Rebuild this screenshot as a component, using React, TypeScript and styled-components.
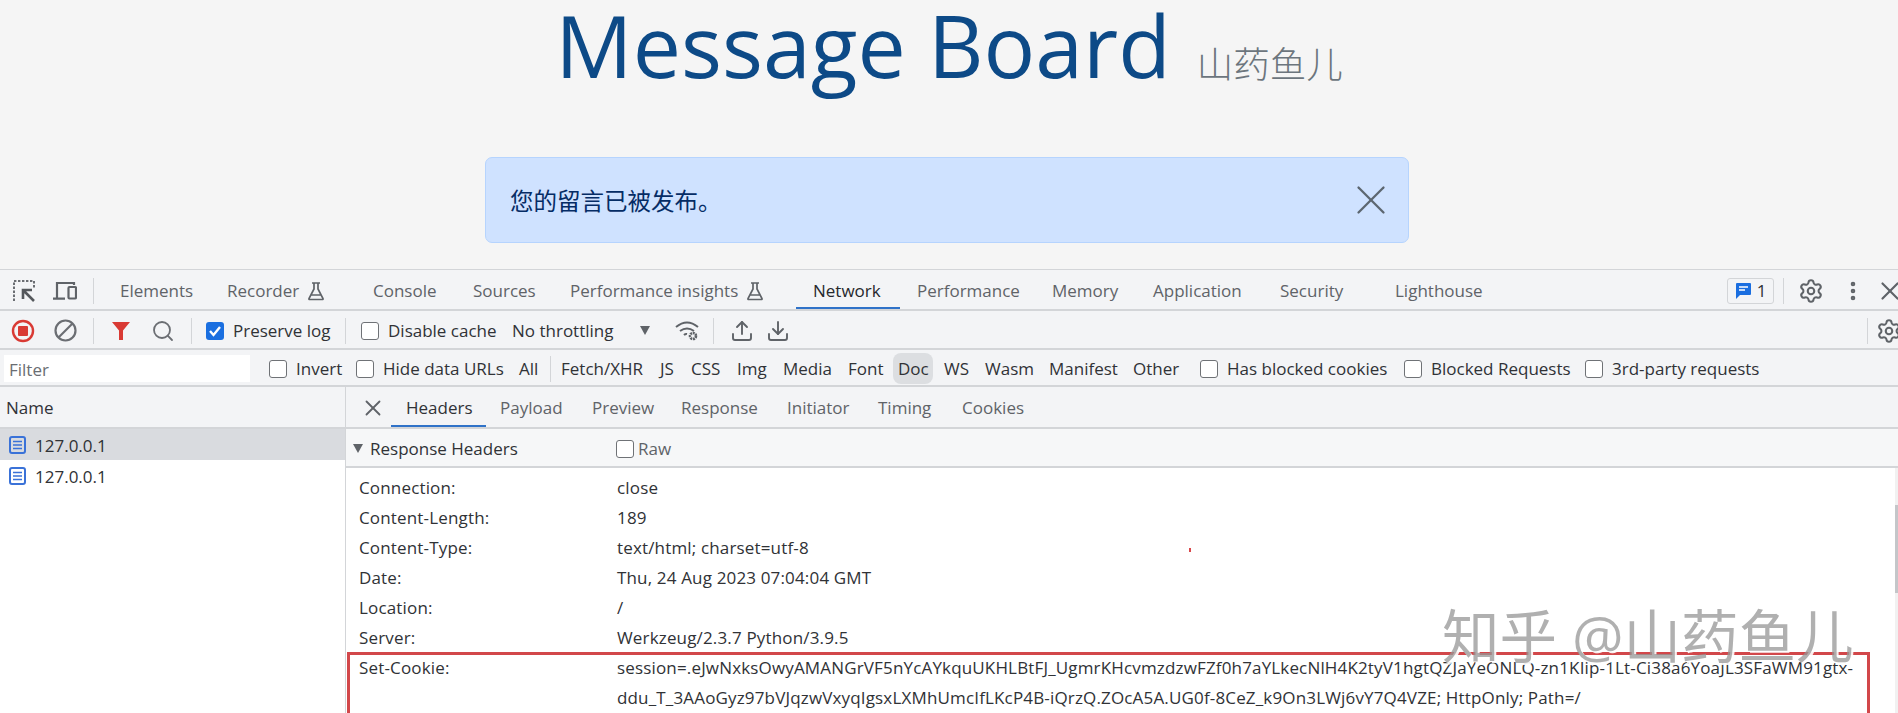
import React from "react";
import styled, { createGlobalStyle } from "styled-components";
import { Settings, EllipsisVertical, X, Search, Upload, Download } from "lucide-react";

const GlobalStyle = createGlobalStyle`
  html, body {
    margin: 0;
    height: 713px;
    overflow: hidden;
    background: #fff;
    font-family: "Open Sans", "Noto Sans CJK SC", sans-serif;
  }
  * { box-sizing: border-box; }
`;

const mainTabs = [
  { label: "Elements", w: 107 },
  { label: "Recorder", w: 146, flask: true },
  { label: "Console", w: 100 },
  { label: "Sources", w: 97 },
  { label: "Performance insights", w: 243, flask: true },
  { label: "Network", w: 104, active: true },
  { label: "Performance", w: 135 },
  { label: "Memory", w: 101 },
  { label: "Application", w: 127 },
  { label: "Security", w: 115 },
  { label: "Lighthouse", w: 120 },
];

const filterTypes = [
  { label: "All", w: 31 },
  { label: "Fetch/XHR", w: 99, indent: 10 },
  { label: "JS", w: 31 },
  { label: "CSS", w: 46 },
  { label: "Img", w: 46 },
  { label: "Media", w: 65 },
  { label: "Font", w: 45 },
  { label: "Doc", w: 40, active: true },
  { label: "WS", w: 41 },
  { label: "Wasm", w: 64 },
  { label: "Manifest", w: 84 },
  { label: "Other", w: 67 },
];

const detailTabs = [
  { label: "Headers", w: 95, active: true },
  { label: "Payload", w: 92 },
  { label: "Preview", w: 89 },
  { label: "Response", w: 106 },
  { label: "Initiator", w: 91 },
  { label: "Timing", w: 84 },
  { label: "Cookies", w: 80 },
];

const headers = [
  { name: "Connection:", value: "close" },
  { name: "Content-Length:", value: "189" },
  { name: "Content-Type:", value: "text/html; charset=utf-8" },
  { name: "Date:", value: "Thu, 24 Aug 2023 07:04:04 GMT" },
  { name: "Location:", value: "/" },
  { name: "Server:", value: "Werkzeug/2.3.7 Python/3.9.5" },
  {
    name: "Set-Cookie:",
    value:
      "session=.eJwNxksOwyAMANGrVF5nYcAYkquUKHLBtFJ_UgmrKHcvmzdzwFZf0h7aYLkecNlH4K2tyV1hgtQZJaYeONLQ-zn1KIip-1Lt-Ci38a6YoaJL3SFaWM91gtx-ddu_T_3AAoGyz97bVJqzwVxyqIgsxLXMhUmcIfLKcP4B-iQrzQ.ZOcA5A.UG0f-8CeZ_k9On3LWj6vY7Q4VZE; HttpOnly; Path=/",
  },
];

const Flask = () => (
  <svg width="18" height="20" viewBox="0 0 18 20" fill="none" stroke="#5f6368" strokeWidth="1.7">
    <path d="M5 2h8M7 2v6L2 17.5q-.4 1 .8 1h12.4q1.2 0 .8-1L11 8V2M4.5 14h9" />
  </svg>
);

const InspectIcon = () => (
  <svg width="22" height="22" viewBox="0 0 22 22" fill="none" stroke="#6b6e73" strokeWidth="2">
    <path d="M1 21V1h20v8" strokeDasharray="2.4 1.6" />
    <path d="M21 21L10 10M10 19v-9h9" stroke="#55585c" strokeWidth="2.6" />
  </svg>
);

const DeviceIcon = () => (
  <svg width="24" height="19" viewBox="0 0 24 19" fill="none" stroke="#5f6368" strokeWidth="2.2">
    <path d="M4 17V2h17v2M0 17.6h12" />
    <rect x="15.5" y="6" width="7.5" height="11.5" rx="1" />
  </svg>
);

const RecordIcon = () => (
  <svg width="24" height="24" viewBox="0 0 24 24">
    <circle cx="12" cy="12" r="10" fill="none" stroke="#d93a34" strokeWidth="2.4" />
    <rect x="7" y="7" width="10" height="10" rx="1" fill="#d93a34" />
  </svg>
);

const ClearIcon = () => (
  <svg width="23" height="23" viewBox="0 0 23 23" fill="none" stroke="#6b6e73" strokeWidth="2.2">
    <circle cx="11.5" cy="11.5" r="10" />
    <path d="M4.5 18.5L18.5 4.5" />
  </svg>
);

const FunnelIcon = () => (
  <svg width="18" height="18" viewBox="0 0 18 18">
    <path d="M0 0h18L11 8.5V18H7V8.5z" fill="#d93a34" />
  </svg>
);

const WifiGear = () => (
  <svg width="26" height="22" viewBox="0 0 26 22" fill="none" stroke="#5f6368" strokeWidth="2">
    <path d="M1 7q11-9 22 0M5 11q7-5 14 0M9 15q1.5-1.400 3-1" />
    <circle cx="18" cy="16" r="3" strokeWidth="2.6" strokeDasharray="2 .7" />
  </svg>
);

const DocIcon = () => (
  <svg width="17" height="18" viewBox="0 0 17 18" fill="none">
    <rect x="1" y="1" width="15" height="16" rx="2" stroke="#3a72d8" strokeWidth="2" />
    <path d="M4 5.5h9M4 9h9M4 12.500h9" stroke="#3a72d8" strokeWidth="1.6" />
  </svg>
);

const MessageIcon = () => (
  <svg width="17" height="17" viewBox="0 0 17 17">
    <path d="M2 1h13a1 1 0 0 1 1 1v10a1 1 0 0 1-1 1H5l-4 4V2a1 1 0 0 1 1-1z" fill="#1a6ee0" />
    <path d="M4 5h9M4 8h6" stroke="#fff" strokeWidth="1.6" />
  </svg>
);

const App = () => {
  return (
    <Page>
      <GlobalStyle />
      <Hero>
        <Heading>
          Message Board <small>山药鱼儿</small>
        </Heading>
        <Alert>
          您的留言已被发布。
          <CloseButton>
            <X size={50} strokeWidth={1.1} />
          </CloseButton>
        </Alert>
      </Hero>

      <TabBar>
        <ToolButton $w={47}><InspectIcon /></ToolButton>
        <ToolButton $w={36}><DeviceIcon /></ToolButton>
        <Divider $h={26} $gap={10} />
        <TabList>
          {mainTabs.map((tab) => (
            <MainTab key={tab.label} $w={tab.w} $active={tab.active}>
              <span>{tab.label}</span>
              {tab.flask && <Flask />}
            </MainTab>
          ))}
        </TabList>
        <BarEnd>
          <IssueBadge>
            <MessageIcon /> 1
          </IssueBadge>
          <Divider $h={26} $gap={9} />
          <BarGear size={26} color="#5f6368" strokeWidth={1.9} $left={14} />
          <BarDots size={24} color="#5f6368" strokeWidth={2.6} />
          <BarClose size={30} color="#5f6368" strokeWidth={1.7} />
        </BarEnd>
      </TabBar>

      <Toolbar>
        <ToolButton $w={46}><RecordIcon /></ToolButton>
        <ToolButton $w={38}><ClearIcon /></ToolButton>
        <Divider $h={26} $gap={9} />
        <ToolButton $w={54}><FunnelIcon /></ToolButton>
        <ToolButton $w={30}><Search size={24} color="#6b6e73" strokeWidth={1.8} /></ToolButton>
        <Divider $h={26} $gap={13} />
        <CheckLabel $left={14} $w={139}>
          <CheckedBox>
            <svg width="14" height="14" viewBox="0 0 14 14" fill="none" stroke="#fff" strokeWidth="2.4">
              <path d="M2 7l3.500 4L12 3" />
            </svg>
          </CheckedBox>
          Preserve log
        </CheckLabel>
        <Divider $h={26} />
        <CheckLabel $left={15} $w={151}>
          <Box />
          Disable cache
        </CheckLabel>
        <ToolText>No throttling</ToolText>
        <Caret />
        <ToolButton $w={51} $left={12}><WifiGear /></ToolButton>
        <Divider $h={26} />
        <ToolButton $w={34} $left={11}><Upload size={24} color="#5f6368" strokeWidth={1.9} /></ToolButton>
        <ToolButton $w={38}><Download size={24} color="#5f6368" strokeWidth={1.9} /></ToolButton>
        <BarEnd>
          <Divider $h={26} />
          <BarGear size={26} color="#5f6368" strokeWidth={1.9} $left={8} $right={-4} />
        </BarEnd>
      </Toolbar>

      <FilterBar>
        <FilterInput>Filter</FilterInput>
        <CheckLabel $left={19} $w={87}>
          <Box />
          Invert
        </CheckLabel>
        <CheckLabel $left={0} $w={163}>
          <Box />
          Hide data URLs
        </CheckLabel>
        {filterTypes.map((type, idx) => (
          <React.Fragment key={type.label}>
            <TypeChip $w={type.w} $active={type.active} $indent={type.indent}>
              {type.label}
            </TypeChip>
            {idx === 0 && <Divider $h={26} />}
          </React.Fragment>
        ))}
        <CheckLabel $left={0} $w={204}>
          <Box />
          Has blocked cookies
        </CheckLabel>
        <CheckLabel $left={0} $w={181}>
          <Box />
          Blocked Requests
        </CheckLabel>
        <CheckLabel $left={0} $w={180}>
          <Box />
          3rd-party requests
        </CheckLabel>
      </FilterBar>

      <Split>
        <Sidebar>
          <SideHead>Name</SideHead>
          <RequestRow $selected>
            <DocIcon />
            127.0.0.1
          </RequestRow>
          <RequestRow>
            <DocIcon />
            127.0.0.1
          </RequestRow>
        </Sidebar>
        <Detail>
          <DetailTabs>
            <CloseTab>
              <X size={26} color="#5f6368" strokeWidth={1.7} />
            </CloseTab>
            {detailTabs.map((tab) => (
              <DetailTab key={tab.label} $w={tab.w} $active={tab.active}>
                {tab.label}
              </DetailTab>
            ))}
          </DetailTabs>
          <SectionHead>
            <Triangle />
            <SectionTitle>Response Headers</SectionTitle>
            <Box />
            <RawLabel>Raw</RawLabel>
          </SectionHead>
          <HeaderList>
            {headers.map((row) => (
              <HeaderRow key={row.name}>
                <HeaderName>{row.name}</HeaderName>
                <HeaderValue>{row.value}</HeaderValue>
              </HeaderRow>
            ))}
          </HeaderList>
          <ScrollTrack>
            <ScrollThumb />
          </ScrollTrack>
        </Detail>
      </Split>

      <RedDot />
      <Highlight />
      <Watermark>知乎 @山药鱼儿</Watermark>
    </Page>
  );
};

export default App;

const Page = styled.div`
  position: relative;
  width: 1898px;
  height: 713px;
  overflow: hidden;
  font-size: 17px;
  color: #303236;
`;

const Hero = styled.div`
  height: 269px;
  background: #f5f5f5;
  overflow: hidden;
`;

const Heading = styled.h1`
  margin: 0;
  text-align: center;
  font-size: 86px;
  font-weight: 400;
  line-height: 90px;
  color: #0d4a87;
  small {
    margin-left: 3.5px;
    font-size: 36.5px;
    line-height: 1;
    font-weight: 300;
    color: #6c757d;
  }
`;

const Alert = styled.div`
  position: relative;
  display: flex;
  align-items: center;
  width: 924px;
  height: 86px;
  margin: 67px 0 0 485px;
  padding-left: 24px;
  border: 1px solid #b6d4fe;
  border-radius: 7px;
  background: #cfe2ff;
  font-size: 23.5px;
  color: #052c65;
`;

const CloseButton = styled.span`
  position: absolute;
  right: 12px;
  top: 17px;
  display: flex;
  color: #5c6670;
`;

const Bar = styled.div`
  display: flex;
  align-items: center;
  padding-top: 2px;
  background: #f3f4f6;
  border-bottom: 2px solid #d3d5d8;
`;

const TabBar = styled(Bar)`
  height: 42px;
  border-top: 1px solid #d3d5d8;
  font-size: 17px;
  color: #5f6368;
`;

const Toolbar = styled(Bar)`
  height: 39px;
`;

const FilterBar = styled(Bar)`
  height: 37px;
`;

const TabList = styled.div`
  display: flex;
  align-items: stretch;
  height: 39px;
  margin: -2px 0 0 26px;
`;

const MainTab = styled.div<{ $w: number; $active?: boolean }>`
  position: relative;
  display: flex;
  align-items: center;
  flex: none;
  gap: 8px;
  width: ${(p) => p.$w}px;
  padding-top: 2px;
  span {
    color: ${(p) => (p.$active ? "#26282c" : "#5f6368")};
  }
  &::after {
    content: "";
    display: ${(p) => (p.$active ? "block" : "none")};
    position: absolute;
    left: -17px;
    bottom: 0;
    width: 104px;
    height: 2px;
    background: #2f72c8;
  }
`;

const ToolButton = styled.div<{ $w: number; $left?: number }>`
  display: flex;
  align-items: center;
  justify-content: center;
  flex: none;
  width: ${(p) => p.$w}px;
  margin-left: ${(p) => p.$left || 0}px;
`;

const Divider = styled.div<{ $h: number; $gap?: number }>`
  flex: none;
  width: 1px;
  height: ${(p) => p.$h}px;
  margin-left: ${(p) => p.$gap || 0}px;
  background: #d3d5d8;
`;

const BarEnd = styled.div`
  display: flex;
  align-items: center;
  margin-left: auto;
  color: #303236;
`;

const BarGear = styled(Settings)<{ $left: number; $right?: number }>`
  flex: none;
  margin-left: ${(p) => p.$left}px;
  margin-right: ${(p) => p.$right || 0}px;
`;

const BarDots = styled(EllipsisVertical)`
  flex: none;
  margin-left: 17px;
`;

const BarClose = styled(X)`
  flex: none;
  margin-left: 10px;
  margin-right: -7px;
`;

const IssueBadge = styled.div`
  display: flex;
  align-items: center;
  justify-content: center;
  gap: 5px;
  width: 47px;
  height: 26px;
  border: 1px solid #d3d5d8;
  border-radius: 3px;
`;

const CheckLabel = styled.label<{ $left: number; $w: number }>`
  display: flex;
  align-items: center;
  flex: none;
  gap: 9px;
  width: ${(p) => p.$w}px;
  margin-left: ${(p) => p.$left}px;
`;

const Box = styled.span`
  flex: none;
  width: 18px;
  height: 18px;
  border: 1.5px solid #6f7276;
  border-radius: 3px;
  background: #fff;
`;

const CheckedBox = styled(Box)`
  display: flex;
  align-items: center;
  justify-content: center;
  border: none;
  background: #1a6fe0;
`;

const ToolText = styled.span`
  flex: none;
  width: 128px;
`;

const Caret = styled.span`
  flex: none;
  width: 0;
  height: 0;
  border-left: 5.5px solid transparent;
  border-right: 5.5px solid transparent;
  border-top: 9px solid #5f6368;
`;

const FilterInput = styled.div`
  flex: none;
  width: 246px;
  height: 27px;
  margin-left: 4px;
  padding-left: 5px;
  line-height: 30px;
  background: #fff;
  color: #6a6d72;
`;

const TypeChip = styled.div<{ $w: number; $active?: boolean; $indent?: number }>`
  flex: none;
  width: ${(p) => p.$w}px;
  height: 31px;
  margin-left: ${(p) => p.$indent || 0}px;
  margin-right: ${(p) => (p.$active ? 11 : 0)}px;
  padding-left: ${(p) => (p.$active ? 5 : 0)}px;
  line-height: 31px;
  border-radius: 8px;
  background: ${(p) => (p.$active ? "#dcdee1" : "transparent")};
`;

const Split = styled.div`
  display: flex;
  height: 326px;
`;

const Sidebar = styled.div`
  flex: none;
  width: 346px;
  border-right: 1px solid #d3d5d8;
  background: #fff;
`;

const SideHead = styled.div`
  height: 42px;
  padding-left: 6px;
  line-height: 42px;
  border-bottom: 2px solid #d3d5d8;
  background: #f3f4f6;
`;

const RequestRow = styled.div<{ $selected?: boolean }>`
  display: flex;
  align-items: center;
  gap: 9px;
  height: 31px;
  padding: 1px 0 0 9px;
  background: ${(p) => (p.$selected ? "#d9dbdf" : "#fff")};
`;

const Detail = styled.div`
  position: relative;
  flex: 1;
  min-width: 0;
  background: #fff;
`;

const DetailTabs = styled(Bar)`
  height: 42px;
`;

const CloseTab = styled.div`
  display: flex;
  justify-content: center;
  flex: none;
  width: 45px;
  padding-left: 8px;
`;

const DetailTab = styled.div<{ $w: number; $active?: boolean }>`
  flex: none;
  width: ${(p) => p.$w}px;
  height: 38px;
  margin-right: ${(p) => (p.$active ? 14 : 0)}px;
  padding-left: ${(p) => (p.$active ? 15 : 0)}px;
  line-height: 38px;
  color: ${(p) => (p.$active ? "#303236" : "#5f6368")};
  border-bottom: ${(p) => (p.$active ? "2px solid #2f72c8" : "none")};
`;

const SectionHead = styled(Bar)`
  height: 39px;
  padding-left: 7px;
  background: #f6f7f8;
`;

const Triangle = styled.span`
  flex: none;
  width: 0;
  height: 0;
  border-left: 5.5px solid transparent;
  border-right: 5.5px solid transparent;
  border-top: 9px solid #5f6368;
`;

const SectionTitle = styled.span`
  flex: none;
  width: 246px;
  margin-left: 7px;
`;

const RawLabel = styled.span`
  margin-left: 4px;
  color: #5f6368;
`;

const HeaderList = styled.div`
  padding-top: 5px;
`;

const HeaderRow = styled.div`
  display: flex;
  padding-left: 13px;
  line-height: 30px;
  letter-spacing: 0.16px;
`;

const HeaderName = styled.div`
  flex: none;
  width: 258px;
`;

const HeaderValue = styled.div`
  width: 1245px;
  overflow-wrap: anywhere;
`;

const ScrollTrack = styled.div`
  position: absolute;
  right: 0;
  top: 81px;
  bottom: 0;
  width: 3px;
  padding-top: 37px;
  background: #f1f1f1;
`;

const ScrollThumb = styled.div`
  height: 88px;
  background: #c4c6c9;
`;

const RedDot = styled.div`
  position: absolute;
  left: 1189px;
  top: 548px;
  width: 2px;
  height: 4px;
  background: #d9484b;
`;

const Highlight = styled.div`
  position: absolute;
  left: 347px;
  top: 652px;
  width: 1523px;
  height: 80px;
  border: 3px solid #d2474a;
`;

const Watermark = styled.div`
  position: absolute;
  left: 1442px;
  top: 598px;
  font-size: 57.5px;
  line-height: 76px;
  white-space: nowrap;
  color: rgba(150, 150, 150, 0.75);
  text-shadow: 2px 2px 0 rgba(255, 255, 255, 0.9);
`;
